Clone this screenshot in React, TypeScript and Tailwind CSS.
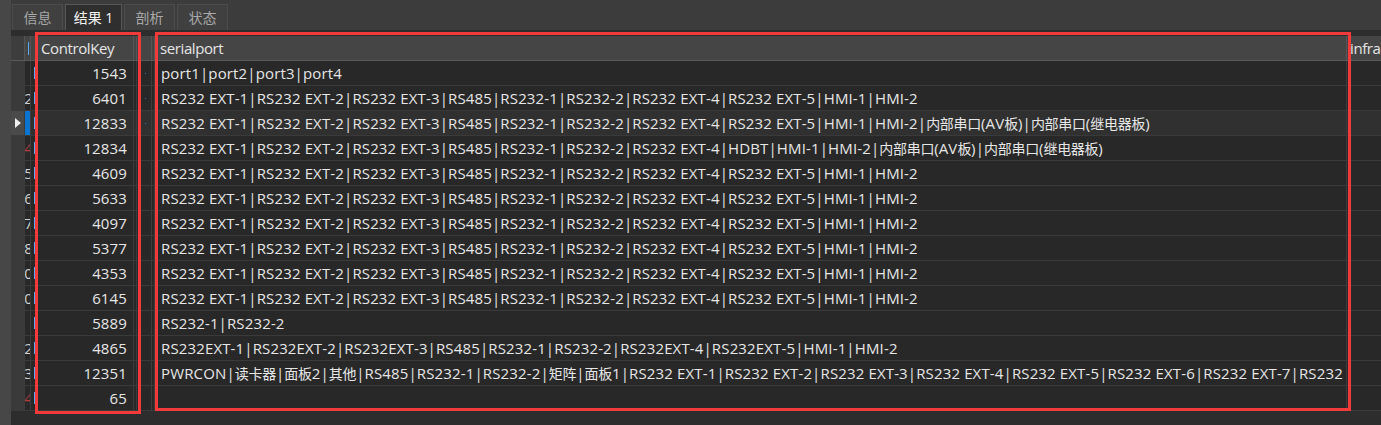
import React from 'react';

const rows = [
  { n: '', key: '1543', sp: 'port1|port2|port3|port4' },
  { n: '2', key: '6401', sp: 'RS232 EXT-1|RS232 EXT-2|RS232 EXT-3|RS485|RS232-1|RS232-2|RS232 EXT-4|RS232 EXT-5|HMI-1|HMI-2' },
  { n: '3', key: '12833', sp: 'RS232 EXT-1|RS232 EXT-2|RS232 EXT-3|RS485|RS232-1|RS232-2|RS232 EXT-4|RS232 EXT-5|HMI-1|HMI-2|内部串口(AV板)|内部串口(继电器板)', current: true },
  { n: '4', key: '12834', sp: 'RS232 EXT-1|RS232 EXT-2|RS232 EXT-3|RS485|RS232-1|RS232-2|RS232 EXT-4|HDBT|HMI-1|HMI-2|内部串口(AV板)|内部串口(继电器板)', red: true },
  { n: '5', key: '4609', sp: 'RS232 EXT-1|RS232 EXT-2|RS232 EXT-3|RS485|RS232-1|RS232-2|RS232 EXT-4|RS232 EXT-5|HMI-1|HMI-2' },
  { n: '6', key: '5633', sp: 'RS232 EXT-1|RS232 EXT-2|RS232 EXT-3|RS485|RS232-1|RS232-2|RS232 EXT-4|RS232 EXT-5|HMI-1|HMI-2' },
  { n: '7', key: '4097', sp: 'RS232 EXT-1|RS232 EXT-2|RS232 EXT-3|RS485|RS232-1|RS232-2|RS232 EXT-4|RS232 EXT-5|HMI-1|HMI-2' },
  { n: '8', key: '5377', sp: 'RS232 EXT-1|RS232 EXT-2|RS232 EXT-3|RS485|RS232-1|RS232-2|RS232 EXT-4|RS232 EXT-5|HMI-1|HMI-2' },
  { n: '0', key: '4353', sp: 'RS232 EXT-1|RS232 EXT-2|RS232 EXT-3|RS485|RS232-1|RS232-2|RS232 EXT-4|RS232 EXT-5|HMI-1|HMI-2' },
  { n: '0', key: '6145', sp: 'RS232 EXT-1|RS232 EXT-2|RS232 EXT-3|RS485|RS232-1|RS232-2|RS232 EXT-4|RS232 EXT-5|HMI-1|HMI-2' },
  { n: '', key: '5889', sp: 'RS232-1|RS232-2' },
  { n: '2', key: '4865', sp: 'RS232EXT-1|RS232EXT-2|RS232EXT-3|RS485|RS232-1|RS232-2|RS232EXT-4|RS232EXT-5|HMI-1|HMI-2' },
  { n: '3', key: '12351', sp: 'PWRCON|读卡器|面板2|其他|RS485|RS232-1|RS232-2|矩阵|面板1|RS232 EXT-1|RS232 EXT-2|RS232 EXT-3|RS232 EXT-4|RS232 EXT-5|RS232 EXT-6|RS232 EXT-7|RS232 EXT-8|RS232 EXT-9' },
  { n: '4', key: '65', sp: '', red: true },
];

const tabs = ['信息', '结果 1', '剖析', '状态'];

const cell = 'h-full shrink-0 border-r border-[#3c3c3c] overflow-hidden whitespace-nowrap';

// CJK runs are set a little smaller so they keep the reference's width
const renderText = (s: string) =>
  s.split(/([\u4e00-\u9fff]+)/).map((part, i) =>
    /[\u4e00-\u9fff]/.test(part) ? (
      <span key={i} className="text-[14px] tracking-[-0.3px]">{part}</span>
    ) : (
      <React.Fragment key={i}>{part}</React.Fragment>
    )
  );

export default function App() {
  return (
    <div className="relative w-[1381px] h-[425px] flex bg-[#2b2b2b] overflow-hidden font-['Open_Sans','Noto_Sans_CJK_SC',sans-serif] text-[15px] text-[#e6e6e6]">
      <div className="w-[11px] shrink-0 bg-[#474747]" />
      <div className="flex-1 flex flex-col min-w-0">
        {/* tab bar */}
        <div className="h-[30px] shrink-0 bg-[#3c3c3c] flex items-end pl-[1px] text-[14px]">
          {tabs.map((t, i) => (
            <div
              key={t}
              className={`h-[26px] mr-[2px] flex items-center justify-center border border-b-0 ${
                i === 1
                  ? 'w-[57px] bg-[#2f2f2f] border-[#575757] text-[#f2f2f2]'
                  : 'w-[51px] bg-[#404040] border-[#4c4c4c] text-[#a8a8a8]'
              }`}
            >
              {t}
            </div>
          ))}
        </div>
        <div className="h-[6px] shrink-0 bg-[#2d2d2d]" />

        {/* header */}
        <div className="h-[25px] shrink-0 flex bg-[#454545] border-b border-[#5a5a5a] tracking-[-0.4px]">
          <div className="w-[14px] h-full shrink-0 border-r border-[#555] bg-[#3d3d3d]" />
          <div className="w-[6px] h-full shrink-0 border-r border-[#555] flex items-center justify-end pr-[1px]">
            <span className="w-[1px] h-[13px] bg-[#5aa9f5]" />
          </div>
          <div className="w-[7px] h-full shrink-0 border-r border-[#555]" />
          <div className="w-[96px] h-full shrink-0 border-r border-[#555] flex items-center pl-[3px]">ControlKey</div>
          <div className="w-[3px] h-full shrink-0 border-r border-[#555]" />
          <div className="w-[3px] h-full shrink-0 border-r border-[#555]" />
          <div className="w-[12px] h-full shrink-0 border-r border-[#555]" />
          <div className="w-[3px] h-full shrink-0 border-r border-[#555]" />
          <div className="w-[1192px] h-full shrink-0 border-r border-[#555] flex items-center pl-[5px]">serialport</div>
          <div className="flex-1 h-full flex items-center pl-[3px] overflow-hidden whitespace-nowrap">infrared</div>
        </div>

        {/* rows */}
        {rows.map((r, i) => (
          <div
            key={i}
            className={`h-[25px] shrink-0 flex border-b border-[#3a3a3a] tracking-[0.14px] ${r.current ? 'bg-[#303030]' : 'bg-[#282828]'}`}
          >
            <div className={`w-[14px] ${cell} flex items-center justify-center ${r.current ? 'bg-[#4a4a4a]' : 'bg-[#3a3a3a]'}`}>
              {r.current && (
                <svg width="8" height="12" viewBox="0 0 8 12">
                  <path d="M1 1 L7 6 L1 11 Z" fill="#f0f0f0" />
                </svg>
              )}
            </div>
            <div className={`w-[6px] ${cell} relative ${r.current ? 'bg-[#0b74d0]' : ''}`}>
              <span className={`absolute right-[-3px] top-[1px] ${r.red ? 'text-[#b43c3c]' : 'text-[#cfcfcf]'}`}>
                {r.current ? '' : r.n}
              </span>
            </div>
            <div className={`w-[7px] ${cell} relative`}>
              <span className="absolute right-[1px] top-[6px] w-[2px] h-[12px] bg-[#5aa9f5]" />
            </div>
            <div className={`w-[96px] ${cell} flex items-center justify-end pr-[6px]`}>{r.key}</div>
            <div className={`w-[3px] ${cell}`} />
            <div className={`w-[3px] ${cell}`} />
            <div className={`w-[12px] ${cell} flex items-center justify-around`}>
              {i < 3 && <span className="w-[1px] h-[1px] bg-[#3a6fb0]" />}
            </div>
            <div className={`w-[3px] ${cell}`} />
            <div className={`w-[1192px] ${cell} flex items-center pl-[6px]`}>
              <span>{renderText(r.sp)}</span>
            </div>
            <div className="flex-1 h-full" />
          </div>
        ))}
        <div className="flex-1 bg-[#2d2d2d]" />
      </div>

      {/* annotation boxes */}
      <div className="absolute left-[35px] top-[32px] w-[106px] h-[382px] border-[3px] border-[#f23a3a] pointer-events-none" />
      <div className="absolute left-[155px] top-[32px] w-[1196px] h-[379px] border-[3px] border-[#f23a3a] pointer-events-none" />
    </div>
  );
}
